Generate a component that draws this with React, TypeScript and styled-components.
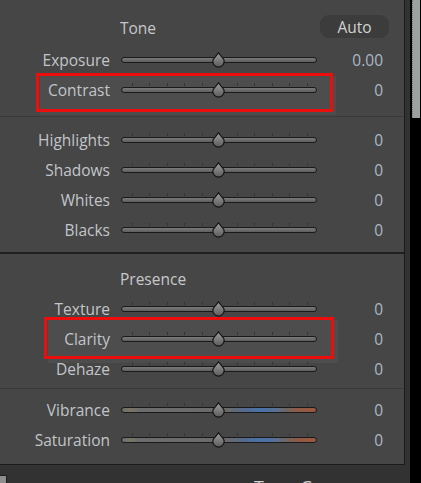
import React from 'react';
import styled, { createGlobalStyle } from 'styled-components';

const GlobalStyle = createGlobalStyle`
  html, body {
    margin: 0;
    background: #000;
  }
  body {
    font-family: 'Open Sans', 'Noto Sans', sans-serif;
    overflow: hidden;
  }
`;

type Box = { x: number; y: number; w: number; h: number };

const Screen = styled.div`
  display: flex;
  width: 421px;
  height: 483px;
  overflow: hidden;
`;

const Main = styled.div`
  width: 410px;
  background: #323232;
  display: flex;
  flex-direction: column;
`;

const Panel = styled.div`
  width: 404px;
  height: 464px;
  background: #464646;
  border-right: 1px solid #1b1b1b;
  border-bottom: 1px solid #1b1b1b;
  display: flex;
  flex-direction: column;
  flex-shrink: 0;
`;

const Group = styled.div<{ $top: number; $bottom: number; $line?: 'soft' | 'hard' }>`
  padding-top: ${(p) => p.$top}px;
  padding-bottom: ${(p) => p.$bottom}px;
  border-bottom: ${(p) =>
    p.$line === 'hard' ? '2px solid #1f1f1f' : p.$line === 'soft' ? '1px solid #3a3a3a' : 'none'};
`;

const Header = styled.div<{ $gap?: number }>`
  display: grid;
  grid-template-columns: 120px 1fr auto;
  height: 30px;
  align-items: center;
  padding-right: 15px;
  margin-bottom: ${(p) => p.$gap || 0}px;
  color: #c6c8ca;
  font-size: 15.5px;
`;

const HeaderTitle = styled.div`
  grid-column: 2;
`;

const AutoButton = styled.button`
  align-self: start;
  margin-top: 2px;
  width: 69px;
  height: 23px;
  border: none;
  border-radius: 9px;
  background: #3c3c3c;
  color: #d2d2d2;
  font-family: inherit;
  font-size: 15.5px;
  padding: 0;
`;

const Row = styled.div`
  position: relative;
  display: grid;
  grid-template-columns: 121px 196px 66px;
  height: 30px;
  align-items: center;
  font-size: 15.5px;
`;

const Label = styled.div`
  position: relative;
  text-align: right;
  padding-right: 11px;
  color: #c2c5c9;
  white-space: nowrap;
`;

const Value = styled.div`
  position: relative;
  text-align: right;
  color: #a9b6c5;
`;

const Hover = styled.div<{ $box: Box }>`
  position: absolute;
  left: ${(p) => p.$box.x}px;
  top: ${(p) => p.$box.y}px;
  width: ${(p) => p.$box.w}px;
  height: ${(p) => p.$box.h}px;
  background: #4d4d4d;
`;

const Mark = styled.div<{ $box: Box }>`
  position: absolute;
  left: ${(p) => p.$box.x}px;
  top: ${(p) => p.$box.y}px;
  width: ${(p) => p.$box.w}px;
  height: ${(p) => p.$box.h}px;
  box-sizing: border-box;
  border: 3px solid #ec0d0d;
`;

const Slider = styled.div`
  position: relative;
  height: 30px;
`;

const Track = styled.div<{ $color?: boolean }>`
  position: absolute;
  left: 0;
  right: 0;
  top: 12px;
  height: 6px;
  box-sizing: border-box;
  border: 1px solid #1a1a1a;
  border-radius: 3px;
  background: ${(p) =>
    p.$color
      ? 'linear-gradient(to right, #6c6c6c 0%, #7b7663 4%, #6c6c6c 9%, #6a6a6a 55%, #55698a 62%, #4873a8 72%, #5a7090 80%, #6e6664 84%, #8e5a46 90%, #9a5840 100%)'
      : 'linear-gradient(to bottom, #7a7a7a, #5e5e5e)'};
`;

const Tick = styled.div<{ $x: number }>`
  position: absolute;
  top: 8px;
  left: ${(p) => p.$x}px;
  width: 1px;
  height: 3px;
  background: #353535;
`;

const ThumbSvg = styled.svg`
  position: absolute;
  left: 90px;
  top: 7px;
`;

const BottomBar = styled.div`
  flex: 1;
  display: flex;
  align-items: flex-start;
  padding-top: 10px;
  overflow: hidden;
`;

const Corner = styled.div`
  width: 7px;
  height: 10px;
  background: #8e8e8e;
  border: 1px solid #1e1e1e;
  border-left: none;
  box-sizing: border-box;
`;

const NextTitle = styled.div`
  margin-left: 247px;
  margin-top: 3px;
  color: #cfcfcf;
  font-size: 18px;
  line-height: 18px;
  white-space: nowrap;
`;

const Gutter = styled.div`
  width: 11px;
  background: #000;
  padding-left: 2px;
  box-sizing: border-box;
`;

const ScrollThumb = styled.div`
  width: 8px;
  height: 118px;
  background: #9ca1a1;
  border-left: 1px dotted #6f7474;
  box-sizing: border-box;
`;

const ticks = Array.from({ length: 11 }, (_, i) => Math.round(10.7 + i * 17.5));

function Thumb() {
  return (
    <ThumbSvg width="15" height="16" viewBox="0 0 15 16">
      <defs>
        <linearGradient id="thumbFill" x1="0" y1="0" x2="0" y2="1">
          <stop offset="0" stopColor="#a0a0a0" />
          <stop offset="1" stopColor="#5a5a5a" />
        </linearGradient>
      </defs>
      <path
        d="M7.5 0.8 L12.6 7.2 A5.6 5.6 0 1 1 2.4 7.2 Z"
        fill="url(#thumbFill)"
        stroke="#151515"
        strokeWidth="1.2"
      />
    </ThumbSvg>
  );
}

type SliderRowProps = {
  label: string;
  value: string;
  ticked?: boolean;
  color?: boolean;
  hover?: Box;
  mark?: Box;
};

function SliderRow({ label, value, ticked = true, color, hover, mark }: SliderRowProps) {
  return (
    <Row>
      {hover && <Hover $box={hover} />}
      <Label>{label}</Label>
      <Slider>
        {ticked && ticks.map((x) => <Tick key={x} $x={x} />)}
        <Track $color={color} />
        <Thumb />
      </Slider>
      <Value>{value}</Value>
      {mark && <Mark $box={mark} />}
    </Row>
  );
}

export default function App() {
  return (
    <>
      <GlobalStyle />
      <Screen>
        <Main>
          <Panel>
            <Group $top={13} $bottom={11} $line="soft">
              <Header $gap={2}>
                <HeaderTitle>Tone</HeaderTitle>
                <AutoButton>Auto</AutoButton>
              </Header>
              <SliderRow label="Exposure" value="0.00" ticked={false} />
              <SliderRow
                label="Contrast"
                value="0"
                hover={{ x: 40, y: 1, w: 296, h: 39 }}
                mark={{ x: 36, y: -2, w: 297, h: 39 }}
              />
            </Group>
            <Group $top={8} $bottom={7} $line="hard">
              <SliderRow label="Highlights" value="0" />
              <SliderRow label="Shadows" value="0" />
              <SliderRow label="Whites" value="0" />
              <SliderRow label="Blacks" value="0" />
            </Group>
            <Group $top={10} $bottom={4} $line="soft">
              <Header>
                <HeaderTitle>Presence</HeaderTitle>
              </Header>
              <SliderRow label="Texture" value="0" />
              <SliderRow
                label="Clarity"
                value="0"
                hover={{ x: 48, y: -4, w: 290, h: 43 }}
                mark={{ x: 44, y: -7, w: 290, h: 42 }}
              />
              <SliderRow label="Dehaze" value="0" />
            </Group>
            <Group $top={6} $bottom={0}>
              <SliderRow label="Vibrance" value="0" color />
              <SliderRow label="Saturation" value="0" color />
            </Group>
          </Panel>
          <BottomBar>
            <Corner />
            <NextTitle>Tone Curve</NextTitle>
          </BottomBar>
        </Main>
        <Gutter>
          <ScrollThumb />
        </Gutter>
      </Screen>
    </>
  );
}
